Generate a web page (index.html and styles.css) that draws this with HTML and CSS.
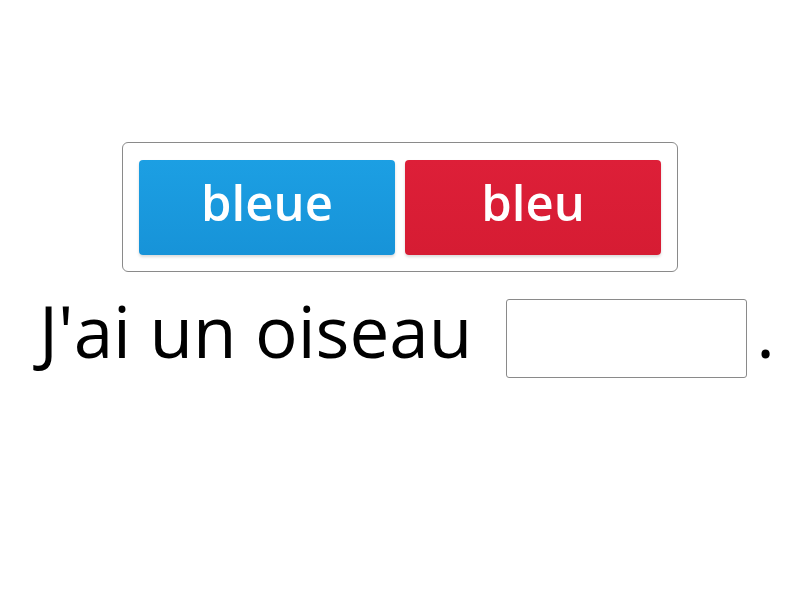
FILE: index.html
```html
<!DOCTYPE html>
<html>
<head>
<meta charset="utf-8">
<link rel="stylesheet" href="styles.css">
</head>
<body>
<div class="page">
  <div class="choices">
    <div class="btn blue">bleue</div>
    <div class="btn red">bleu</div>
  </div>
  <div class="sentence">
    <span class="words">J'ai un oiseau</span>
    <span class="blank"></span>
    <span class="dot">.</span>
  </div>
</div>
</body>
</html>
```

FILE: styles.css
```css
html, body {
  margin: 0;
  padding: 0;
  background: #fff;
}
body {
  width: 800px;
  height: 600px;
  font-family: "Open Sans", sans-serif;
  overflow: hidden;
}
.page {
  padding-top: 142px;
  display: flex;
  flex-direction: column;
  align-items: flex-start;
}
.choices {
  margin-left: 122px;
  width: 522px;
  height: 95px;
  padding: 17px 16px 16px 16px;
  border: 1px solid #8a8a8a;
  border-radius: 6px;
  display: flex;
  gap: 10px;
}
.btn {
  flex: 1;
  border-radius: 4px;
  color: #fff;
  font-weight: 600;
  font-size: 49px;
  line-height: 60px;
  padding-bottom: 12px;
  display: flex;
  align-items: center;
  justify-content: center;
  box-shadow: 0 2px 3px rgba(0,0,0,0.15);
}
.blue {
  background: linear-gradient(#1c9fe3, #1793d8);
}
.red {
  background: linear-gradient(#dd1f38, #d61c33);
}
.sentence {
  display: flex;
  align-items: flex-start;
  margin-left: 39px;
  margin-top: 27px;
  height: 79px;
}
.words {
  font-size: 71px;
  line-height: 80px;
  margin-top: -8px;
  color: #000;
}
.blank {
  width: 241px;
  height: 79px;
  border: 1px solid #8a8a8a;
  border-radius: 3px;
  margin-left: 34px;
  box-sizing: border-box;
}
.dot {
  font-size: 71px;
  line-height: 80px;
  margin-top: -8px;
  margin-left: 9px;
}
```
